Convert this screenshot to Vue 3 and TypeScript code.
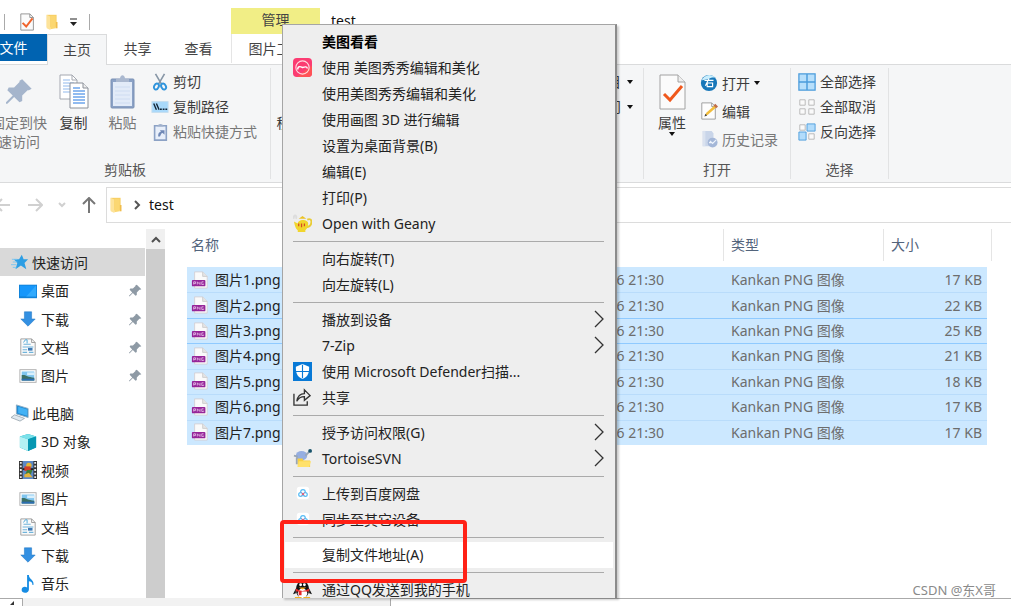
<script setup lang="ts">
interface MenuItem {
  label: string
  icon?: string
  bold?: boolean
  sub?: boolean
  active?: boolean
}
interface NavItem {
  label: string
  icon: string
  root?: boolean
  pinned?: boolean
  selected?: boolean
  gap?: boolean
}
interface Tool {
  label: string
  icon: string
  disabled?: boolean
  drop?: boolean
}

const icons: Record<string, string> = {
  docCheck:
    '<path d="M2 1h10l4 4v14H2z" fill="#fbfbfb" stroke="#8d8d8d"/><path d="M12 1v4h4" fill="none" stroke="#8d8d8d"/><path d="M4 11l4 4 7-9" fill="none" stroke="#f0642c" stroke-width="2.2"/>',
  docCheckBig:
    '<path d="M3 1h18l7 7v27H3z" fill="#fbfbfb" stroke="#a2a2a2"/><path d="M21 1v7h7" fill="#eee" stroke="#a2a2a2"/><path d="M7 20l6 6 12-14" fill="none" stroke="#f0581c" stroke-width="3"/>',
  folder:
    '<path d="M3 2h11v14H3z" fill="#f7ce62"/><path d="M13 10h2v7h-2z" fill="#f0bd4c"/><path d="M3 2l4 2v15l-4-2z" fill="#fde39a"/><path d="M7 3h6v14l-6 1z" fill="#fbd772"/>',
  pin: '<path d="M12 1l7 7-2 1-1 0-4 4 0 4-2 1-4-4-5 5-1 0 0-1 5-5-4-4 1-2 4 0 4-4 0-1z" fill="#a5b5cc"/>',
  pinSmall: '<path d="M12 1l7 7-2 1-1 0-4 4 0 4-2 1-4-4-5 5-1 0 0-1 5-5-4-4 1-2 4 0 4-4 0-1z" fill="#8e9aa5"/>',
  copy:
    '<path d="M1 1h12l5 5v19H1z" fill="#fff" stroke="#a4a8b0"/><path d="M13 1v5h5" fill="none" stroke="#a4a8b0"/><path d="M4 6h7M4 9h11M4 12h11M4 15h11M4 18h11" stroke="#91b9ec"/><path d="M11 9h13l5 5v20H11z" fill="#fff" stroke="#8b9099"/><path d="M24 9v5h5" fill="#eee" stroke="#8b9099"/><path d="M14 14h7M14 17h12M14 20h12M14 23h12M14 26h12M14 29h12" stroke="#6ea5ec" stroke-width="1.4"/>',
  paste:
    '<rect x="2" y="5" width="23" height="29" rx="1" fill="#8ba2c6" stroke="#7b91b5"/><rect x="4" y="8" width="19" height="24" fill="#e2ebf8"/><path d="M6 13h15M6 17h15M6 21h15M6 25h15M6 29h15" stroke="#cedcf1"/><path d="M7 8V5h4c0-5 5-5 5 0h4v3z" fill="#aab8cf"/>',
  cut:
    '<path d="M5 1l7 12M15 1L8 13" stroke="#8796a6" stroke-width="1.8"/><ellipse cx="6" cy="15" rx="2.500" ry="3.500" fill="none" stroke="#3094dc" stroke-width="2.2" transform="rotate(25 6 15)"/><ellipse cx="14" cy="15" rx="2.500" ry="3.500" fill="none" stroke="#3094dc" stroke-width="2.2" transform="rotate(-25 14 15)"/>',
  path:
    '<rect x="1" y="4" width="18" height="12" fill="#a9d9fa" stroke="#c6ddee"/><path d="M3 6l3 7M6 6l3 7" stroke="#123" stroke-width="1.5"/><path d="M10 12.5h2M13 12.5h2M16 12.5h2" stroke="#123" stroke-width="1.4"/>',
  shortcut:
    '<path d="M4 3h13v16H4z" fill="#e8effa" stroke="#8ca2c5" stroke-width="1.8"/><path d="M7 4c0-4 7-4 7 0z" fill="#9fb0cb"/><path d="M8 15c0-4 1-5 3-5L10 8h5v5l-2-2c-2 0-2 2-3 4z" fill="#7089b6"/>',
  open:
    '<circle cx="10" cy="10" r="9" fill="#1877b9"/><path d="M2 7a9 9 0 0 1 15-3c-5-1-7 2-15 3z" fill="#c8eefd"/><path d="M3 14a9 9 0 0 0 14 1 9 9 0 0 1-14-1z" fill="#51cdf2"/><path d="M5 7h10M10 5L6 13M8 10h6v4H8z" fill="none" stroke="#fff" stroke-width="1.3"/>',
  edit:
    '<path d="M2 1h11l4 4v14H2z" fill="#fdfdfd" stroke="#999"/><path d="M13 1v4h4" fill="none" stroke="#999"/><path d="M5 16l2-4 9-8 2 2-9 8z" fill="#f2bd3c"/><path d="M15 4l2-2 3 3-2 2z" fill="#bf6d4a"/><path d="M5 16l1-3 2 2z" fill="#444"/>',
  history:
    '<path d="M3 1h10l2 3v14H3z" fill="#c9d5e9"/><path d="M3 1h3v17H3z" fill="#dae2ef"/><circle cx="14" cy="14" r="5.5" fill="#a4b7d8"/><path d="M11 12l3 3 4-4M10 14h3" fill="none" stroke="#eef4fc" stroke-width="1.3"/>',
  selectAll:
    '<path d="M1 1h18v18H1z" fill="#b7dffb" stroke="#4a9cdc" stroke-width="1.4"/><path d="M10 1v18M1 10h18" stroke="#4a9cdc" stroke-width="1.6"/>',
  selectNone:
    '<path d="M2 2h6v6H2zM12 2h6v6h-6zM2 12h6v6H2zM12 12h6v6h-6z" fill="#fafafa" stroke="#b5b5b5"/>',
  invert:
    '<path d="M2 2h6v6H2zM12 12h6v6h-6z" fill="#fafafa" stroke="#b5b5b5"/><path d="M10 1h9v8h-9zM1 10h8v9H1z" fill="#b2dcfb" stroke="#4a9cdc"/>',
  star:
    '<path d="M12 2l2 5 5 0-4 4 2 7-6-4-6 4 2-7-4-4 6 0z" fill="#2d9ee4"/><path d="M1 7h6M2 10h5M0 13h6M2 16h4" stroke="#75c5f2" stroke-width="1"/>',
  desktop: '<rect x="0" y="3" width="20" height="15" fill="#1182d8"/><path d="M1 4h18v12H1z" fill="#1697fb"/><path d="M19 4v12H8z" fill="#32aafd"/>',
  download: '<path d="M6 2h8v8h4l-8 8-8-8h4z" fill="#3390e2" stroke="#2479c3" stroke-width=".6"/>',
  document:
    '<path d="M2 1h12l4 4v14H2z" fill="#fafafa" stroke="#9b9b9b"/><path d="M14 1v4h4" fill="none" stroke="#999"/><path d="M5 7h8M4 10h12M4 13h5M4 16h5M11 16h5" stroke="#6fb4db" stroke-width="1.2"/><path d="M10 11h5v3h-5z" fill="#3d79b5"/><path d="M5 5l2-3h2v4" fill="none" stroke="#48a7d8"/>',
  picture:
    '<rect x="1" y="3" width="18" height="14" fill="#fff" stroke="#aaa"/><path d="M3 5h14v10H3z" fill="#80c5ef"/><path d="M3 9c4-1 6 2 14 3v3H3z" fill="#3c7065"/><path d="M3 13h14v2H3z" fill="#2d6db3"/><path d="M9 6h8v3H9z" fill="#d8effc"/>',
  pc:
    '<path d="M6 1l13 4v10L6 11z" fill="#218bd4" stroke="#8babc2"/><path d="M8 3l10 3v7L8 10z" fill="#42b2f5"/><path d="M4 12l11 4-5 3-10-4z" fill="#dfe8ef" stroke="#8d9aa5" stroke-width=".8"/>',
  cube:
    '<path d="M10 1l9 3v12l-9 4-9-4V4z" fill="#10a6bf"/><path d="M10 1l9 3-9 3-9-3z" fill="#7ae1ea"/><path d="M1 4l9 3v13l-9-4z" fill="#b4f1f4"/><path d="M10 7l9-3v12l-9 4z" fill="#0697b2"/>',
  video:
    '<rect width="20" height="20" fill="#333"/><path d="M4 0h12v20H4z" fill="#5d88c5"/><path d="M4 8h12v2H4z" fill="#222"/><circle cx="11" cy="5" r="3" fill="#e7b533"/><path d="M6 6h7v5H6z" fill="#cf3d2b"/><path d="M9 10h6l-2 5H7z" fill="#417d39"/><path d="M6 15l5-2 4 5H6z" fill="#e3b33d"/><path d="M2 1v18M18 1v18" stroke="#eee" stroke-width="2" stroke-dasharray="2 2"/>',
  music: '<path d="M9 0h2c0 5 6 5 5 11h-1c0-3-2-4-4-4v9c0 5-9 5-8 0 0-3 4-4 6-2z" fill="#168ce3"/>',
  png:
    '<path d="M4 1h9l5 5v13H4z" fill="#fafafa" stroke="#d4d0d5"/><path d="M13 1v5h5" fill="#e4e4e4" stroke="#ccc"/><rect x="1" y="10" width="15" height="7" rx="1" fill="#962599"/><path d="M3 15v-3h2v2H3M7 15v-3l3 3v-3M14 12h-2v3h2v-1" stroke="#e1b4e2" fill="none"/>',
  meitu:
    '<rect width="20" height="20" rx="4" fill="#fb3c72"/><path d="M4 20h12a4 4 0 0 0 4-4V8z" fill="#ff5256"/><circle cx="10" cy="10" r="7" fill="none" stroke="#ffd8df" stroke-width="1.2"/><path d="M5 12c0-4 3-3 5-2 3-1 5-1 5 1" fill="none" stroke="#fff" stroke-width="1.5"/>',
  geany:
    '<path d="M1 5C0 0 5 1 3 5" fill="none" stroke="#ddd" stroke-width="2"/><path d="M15 6c6-3 6 7-1 8" fill="none" stroke="#e9cc35" stroke-width="2"/><path d="M1 8l4 2c0-5 11-5 11 0 0 4-2 6-3 7v2H5v-2c-2-1-3-4-4-9z" fill="#f1d52d"/><path d="M6 5h8l-4-3z" fill="#ebc326"/><path d="M6 10v3M9 10v4M12 10v3" stroke="#d74b26" stroke-width="1.3"/>',
  defender:
    '<rect width="20" height="20" fill="#0879d6"/><path d="M10 2l7 3c0 7-1 10-7 13-6-3-7-6-7-13z" fill="#fff"/><path d="M10 3v14M3 10h14" stroke="#0879d6" stroke-width="1.2"/>',
  share:
    '<path d="M1 6v12h14v-4" fill="none" stroke="#333" stroke-width="1.4"/><path d="M4 14c1-6 4-8 8-8V2l6 6-6 5V9c-4 0-6 1-8 5z" fill="none" stroke="#333" stroke-width="1.4"/>',
  tortoise:
    '<ellipse cx="9" cy="7" rx="6" ry="5" fill="#95aee1"/><path d="M1 7l4 1M4 9v7M13 7l4-4" fill="none" stroke="#9aa6b5" stroke-width="2"/><circle cx="18" cy="2" r="2" fill="#17536b"/><path d="M5 10h5l1 2h7v7H5z" fill="#f7cf42"/><path d="M6 13h13l-2 6H5z" fill="#ffe16a"/>',
  cloud:
    '<rect x="4" y="3" width="13" height="13" rx="3" fill="#fff"/><circle cx="8" cy="11" r="2" fill="none" stroke="#57bcf5" stroke-width="1.3"/><circle cx="13" cy="11" r="2" fill="none" stroke="#57bcf5" stroke-width="1.3"/><path d="M8 9c0-4 5-4 5 0" fill="none" stroke="#57bcf5" stroke-width="1.3"/><path d="M9 9l3 3M12 9l-3 3" stroke="#ec5b72"/>',
  qq:
    '<ellipse cx="10" cy="10" rx="7" ry="9" fill="#111"/><path d="M3 9l-3 6 3-1M17 9l3 6-3-1" fill="#111"/><ellipse cx="10" cy="14" rx="5" ry="5" fill="#fff"/><circle cx="8" cy="5" r="1.5" fill="#fff"/><circle cx="12" cy="5" r="1.5" fill="#fff"/><path d="M6 8h8l-4 2z" fill="#f6ac19"/><path d="M3 9q7 5 14 0v3H9v4H6v-4H3z" fill="#e82727"/><path d="M2 18h7v2H2zM11 18h7v2h-7z" fill="#f4b322"/>',
}

const smallClipboard: Tool[] = [
  { label: '剪切', icon: 'cut' },
  { label: '复制路径', icon: 'path' },
  { label: '粘贴快捷方式', icon: 'shortcut', disabled: true },
]
const openTools: Tool[] = [
  { label: '打开', icon: 'open', drop: true },
  { label: '编辑', icon: 'edit' },
  { label: '历史记录', icon: 'history', disabled: true },
]
const selectTools: Tool[] = [
  { label: '全部选择', icon: 'selectAll' },
  { label: '全部取消', icon: 'selectNone' },
  { label: '反向选择', icon: 'invert' },
]
const nav: NavItem[] = [
  { label: '快速访问', icon: 'star', root: true, selected: true },
  { label: '桌面', icon: 'desktop', pinned: true },
  { label: '下载', icon: 'download', pinned: true },
  { label: '文档', icon: 'document', pinned: true },
  { label: '图片', icon: 'picture', pinned: true },
  { label: '此电脑', icon: 'pc', root: true, gap: true },
  { label: '3D 对象', icon: 'cube' },
  { label: '视频', icon: 'video' },
  { label: '图片', icon: 'picture' },
  { label: '文档', icon: 'document' },
  { label: '下载', icon: 'download' },
  { label: '音乐', icon: 'music' },
]
const files = [17, 22, 25, 21, 18, 17, 17].map((size, i) => ({
  name: `图片${i + 1}.png`,
  date: '2023/12/16 21:30',
  type: 'Kankan PNG 图像',
  size: `${size} KB`,
  focused: i === 2,
}))
const menu: MenuItem[][] = [
  [
    { label: '美图看看', bold: true },
    { label: '使用 美图秀秀编辑和美化', icon: 'meitu' },
    { label: '使用美图秀秀编辑和美化' },
    { label: '使用画图 3D 进行编辑' },
    { label: '设置为桌面背景(B)' },
    { label: '编辑(E)' },
    { label: '打印(P)' },
    { label: 'Open with Geany', icon: 'geany' },
  ],
  [{ label: '向右旋转(T)' }, { label: '向左旋转(L)' }],
  [
    { label: '播放到设备', sub: true },
    { label: '7-Zip', sub: true },
    { label: '使用 Microsoft Defender扫描...', icon: 'defender' },
    { label: '共享', icon: 'share' },
  ],
  [
    { label: '授予访问权限(G)', sub: true },
    { label: 'TortoiseSVN', icon: 'tortoise', sub: true },
  ],
  [
    { label: '上传到百度网盘', icon: 'cloud' },
    { label: '同步至其它设备', icon: 'cloud' },
  ],
  [{ label: '复制文件地址(A)', active: true }],
  [{ label: '通过QQ发送到我的手机', icon: 'qq' }],
]
</script>

<template>
  <div class="window">
    <header class="titlebar">
      <div class="quick">
        <i class="bar"></i>
        <button aria-label="属性"><svg class="ic18" viewBox="0 0 20 20" v-html="icons.docCheck" /></button>
        <button aria-label="文件夹"><svg class="ic18" viewBox="0 0 20 20" v-html="icons.folder" /></button>
        <button class="custom" aria-label="自定义"><svg width="9" height="8" viewBox="0 0 9 8"><path d="M1 1h7" stroke="#222" /><path d="M1 4h7L4.500 8z" fill="#222" /></svg></button>
        <i class="bar"></i>
      </div>
      <div class="context-title">管理</div>
      <h1>test</h1>
    </header>

    <nav class="tabs">
      <button class="file">文件</button>
      <button class="home">主页</button>
      <button>共享</button>
      <button>查看</button>
      <button class="context">图片工具</button>
    </nav>

    <section class="ribbon">
      <div class="group clipboard">
        <div class="body">
          <button class="big pinbtn off">
            <svg width="27" height="27" viewBox="0 0 20 20" v-html="icons.pin" />
            <span>固定到快<br />速访问</span>
          </button>
          <button class="big"><svg width="30" height="35" viewBox="0 0 30 35" v-html="icons.copy" /><span>复制</span></button>
          <button class="big off"><svg width="27" height="35" viewBox="0 0 27 35" v-html="icons.paste" /><span>粘贴</span></button>
          <div class="stack">
            <button v-for="t in smallClipboard" :key="t.label" :class="{ off: t.disabled }">
              <svg class="ic18" viewBox="0 0 20 20" v-html="icons[t.icon]" />{{ t.label }}
            </button>
          </div>
        </div>
        <div class="caption">剪贴板</div>
      </div>
      <div class="group organize">
        <div class="body">
          <button class="big"><svg width="27" height="35" viewBox="0 0 20 20" v-html="icons.folder" /><span>移动到</span></button>
          <div class="stack">
            <button>新建项目<i class="caret"></i></button>
            <button>轻松访问<i class="caret"></i></button>
          </div>
        </div>
      </div>
      <div class="group opening">
        <div class="body">
          <button class="big props">
            <svg width="30" height="36" viewBox="0 0 30 36" v-html="icons.docCheckBig" />
            <span>属性</span><i class="caret"></i>
          </button>
          <div class="stack roomy">
            <button v-for="t in openTools" :key="t.label" :class="{ off: t.disabled }">
              <svg class="ic18" viewBox="0 0 20 20" v-html="icons[t.icon]" />{{ t.label }}<i v-if="t.drop" class="caret"></i>
            </button>
          </div>
        </div>
        <div class="caption">打开</div>
      </div>
      <div class="group selecting">
        <div class="body">
          <div class="stack">
            <button v-for="t in selectTools" :key="t.label">
              <svg class="ic18" viewBox="0 0 20 20" v-html="icons[t.icon]" />{{ t.label }}
            </button>
          </div>
        </div>
        <div class="caption">选择</div>
      </div>
    </section>

    <div class="address">
      <div class="arrows">
        <button aria-label="后退"><svg width="16" height="16" viewBox="0 0 16 16"><path d="M15 8H1M7 2L1 8l6 6" /></svg></button>
        <button aria-label="前进"><svg width="16" height="16" viewBox="0 0 16 16"><path d="M1 8h14M9 2l6 6-6 6" /></svg></button>
        <button aria-label="最近"><svg width="8" height="16" viewBox="0 0 8 16"><path d="M1 6l3 3 3-3" /></svg></button>
        <button class="up" aria-label="向上"><svg width="14" height="16" viewBox="0 0 14 16"><path d="M7 16V1M1 7l6-6 6 6" /></svg></button>
      </div>
      <div class="crumbs">
        <svg class="ic18" viewBox="0 0 20 20" v-html="icons.folder" />
        <svg width="7" height="10" viewBox="0 0 7 10"><path d="M1 1l4 4-4 4" fill="none" stroke="#555" stroke-width="2" /></svg>
        <a href="#">test</a>
      </div>
    </div>

    <main>
      <aside>
        <a v-for="(n, i) in nav" :key="i" href="#" :class="{ root: n.root, selected: n.selected, gap: n.gap }">
          <svg class="ic18" viewBox="0 0 20 20" v-html="icons[n.icon]" />
          <span>{{ n.label }}</span>
          <svg v-if="n.pinned" class="pinned" viewBox="0 0 20 20" v-html="icons.pinSmall" />
        </a>
      </aside>
      <div class="scroll">
        <button aria-label="向上滚动"><svg width="10" height="7" viewBox="0 0 10 7"><path d="M1 6l4-4 4 4" fill="none" stroke="#505050" stroke-width="2" /></svg></button>
      </div>
      <div class="files">
        <table>
          <colgroup><col /><col class="c-date" /><col class="c-type" /><col class="c-size" /><col class="c-end" /></colgroup>
          <thead>
            <tr>
              <th><div class="first">名称</div></th>
              <th><div></div></th>
              <th><div>类型</div></th>
              <th colspan="2"><div class="last">大小</div></th>
            </tr>
          </thead>
          <tbody>
            <tr v-for="f in files" :key="f.name" :class="{ focused: f.focused }">
              <td><div class="name"><svg class="ic18" viewBox="0 0 20 20" v-html="icons.png" />{{ f.name }}</div></td>
              <td class="date">{{ f.date }}</td>
              <td class="type">{{ f.type }}</td>
              <td class="size">{{ f.size }}</td>
              <td class="end"></td>
            </tr>
          </tbody>
        </table>
      </div>
    </main>

    <div class="menu" role="menu">
      <div v-for="(g, gi) in menu" :key="gi" class="section">
        <button v-for="m in g" :key="m.label" role="menuitem" :class="{ bold: m.bold, active: m.active }">
          <span class="slot"><svg v-if="m.icon" width="19" height="19" viewBox="0 0 20 20" v-html="icons[m.icon]" /></span>
          <span>{{ m.label }}</span>
          <svg v-if="m.sub" class="more" width="10" height="18" viewBox="0 0 10 18"><path d="M1 1l8 8-8 8" fill="none" stroke="#333" stroke-width="1.3" /></svg>
        </button>
      </div>
    </div>
    <div class="marker"></div>
    <div class="watermark">CSDN @东X哥</div>

    <footer>
      <i class="corner"><svg width="14" height="6" viewBox="0 0 14 6"><path d="M14 2v4h-4z" fill="#333" /></svg></i>
      <i class="panel"></i>
    </footer>
  </div>
</template>

<style>
html,
body {
  margin: 0;
  overflow: hidden;
}
</style>

<style scoped>
.window {
  position: relative;
  display: flex;
  flex-direction: column;
  height: 100vh;
  overflow: hidden;
  background: #fff;
  color: #222;
  font: 14px/19px 'Noto Sans', 'Noto Sans CJK SC', sans-serif;
}
button {
  padding: 0;
  border: 0;
  background: none;
  color: inherit;
  font: inherit;
  white-space: nowrap;
}
a {
  color: inherit;
  text-decoration: none;
}
svg {
  display: block;
  flex: none;
}
.ic18 {
  width: 18px;
  height: 18px;
}
.caret {
  width: 0;
  height: 0;
  border: 3px solid transparent;
  border-top: 4px solid #111;
  border-bottom: 0;
}

.titlebar {
  display: flex;
  height: 34px;
  flex: none;
}
.quick {
  display: flex;
  align-items: center;
  gap: 7px;
  width: 231px;
  padding: 10px 0 0 4px;
  box-sizing: border-box;
}
.quick .bar {
  width: 1px;
  height: 16px;
  background: #aaa;
}
.quick .bar:first-child {
  margin-right: 7px;
}
.custom {
  margin-right: 4px;
}
.context-title {
  width: 89px;
  margin-top: 8px;
  background: #f1ee86;
  line-height: 24px;
  text-align: center;
  color: #444;
}
h1 {
  margin: 11px 0 0 11px;
  font: inherit;
  color: #111;
}

.tabs {
  display: flex;
  flex: none;
  height: 30px;
  border-bottom: 1px solid #dadbdc;
  margin-left: -20px;
}
.tabs button {
  width: 61px;
  height: 29px;
  color: #444;
}
.tabs .file {
  width: 67px;
  height: 27px;
  background: #0063b1;
  color: #fff;
}
.tabs .home {
  width: 60px;
  height: 31px;
  padding-bottom: 2px;
  border: 1px solid #dadbdc;
  border-bottom: 0;
  background: #f5f6f7;
}
.tabs .context {
  width: 90px;
  margin-left: 2px;
  border-left: 1px solid #e5e5e5;
}

.ribbon {
  display: flex;
  flex: none;
  height: 117px;
  background: #f5f6f7;
  border-bottom: 1px solid #dadbdc;
  color: #3c3c3c;
}
.group {
  display: flex;
  flex-direction: column;
  justify-content: space-between;
  box-sizing: border-box;
  margin: 3px 0;
  border-right: 1px solid #e2e3e4;
}
.body {
  display: flex;
}
.caption {
  text-align: center;
  line-height: 18px;
  color: #555;
}
.clipboard {
  width: 291px;
  margin-left: -20px;
}
.organize {
  width: 373px;
}
.organize .body {
  justify-content: space-between;
  padding: 0 10px 0 2px;
}
.opening {
  width: 147px;
}
.selecting {
  width: 98px;
}
.big {
  display: flex;
  flex-direction: column;
  align-items: center;
  width: 49px;
  padding-top: 6px;
}
.big span {
  margin-top: 4px;
}
.pinbtn {
  width: 68px;
  margin-left: 5px;
  margin-right: -4px;
}
.pinbtn svg {
  margin: 4px 0;
}
.props {
  width: 56px;
}
.props span {
  margin-top: 3px;
}
.stack {
  display: flex;
  flex-direction: column;
  padding: 1px 0 0 7px;
}
.stack button {
  display: flex;
  align-items: center;
  gap: 4px;
  height: 25px;
}
.clipboard .stack {
  padding-left: 4px;
}
.stack.roomy {
  padding-left: 0;
}
.stack.roomy button {
  height: 28px;
}
.organize .stack button {
  gap: 6px;
}
.off {
  color: #777;
}

.address {
  display: flex;
  flex: none;
  height: 36px;
  padding-top: 4px;
}
.arrows {
  display: flex;
  align-items: center;
  justify-content: space-between;
  width: 101px;
  margin-left: -5px;
}
.arrows path {
  fill: none;
  stroke: #d0d0d0;
  stroke-width: 2;
}
.arrows .up path {
  stroke: #777;
}
.crumbs {
  display: flex;
  flex: 1;
  align-items: center;
  gap: 8px;
  margin-left: 10px;
  padding: 0 0 1px 1px;
  border: 1px solid #dcdcdc;
  border-right: 0;
  color: #111;
}

main {
  display: flex;
  flex: 1;
  min-height: 0;
  padding-top: 6px;
}
aside {
  display: flex;
  flex-direction: column;
  width: 145px;
  padding-top: 19px;
  box-sizing: border-box;
}
aside a {
  display: flex;
  flex: 1;
  align-items: center;
  gap: 4px;
  padding: 0 3px 0 19px;
}
aside .root {
  padding-left: 11px;
  gap: 3px;
}
aside .selected {
  background: #d9d9d9;
}
aside .gap {
  margin-top: 9px;
}
.pinned {
  width: 13px;
  height: 13px;
  margin-left: auto;
}
.scroll {
  width: 19px;
  margin-left: 1px;
  background: #cdcdcd;
}
.scroll button {
  display: flex;
  align-items: center;
  justify-content: center;
  width: 100%;
  height: 20px;
  background: #f0f0f0;
}
.files {
  flex: 1;
  padding: 0 19px 0 22px;
}
table {
  width: 100%;
  height: 216px;
  table-layout: fixed;
  border-collapse: separate;
  border-spacing: 0;
}
.c-date {
  width: 200px;
}
.c-type {
  width: 160px;
}
.c-size {
  width: 103px;
}
.c-end {
  width: 5px;
}
th,
td {
  padding: 0;
  text-align: left;
  font-weight: normal;
}
th {
  height: 38px;
  vertical-align: top;
  color: #53647c;
}
th div {
  height: 32px;
  padding-left: 7px;
  border-right: 1px solid #e5e5e5;
  line-height: 32px;
}
th .first {
  padding-left: 4px;
}
td {
  height: 24px;
  padding-bottom: 1px;
  border-top: 1px solid #b9dcfb;
  background: #cce8ff;
  color: #6d6d6d;
  box-sizing: border-box;
}
tr:first-child td {
  border-top-color: #cce8ff;
}
.focused td,
.focused + tr td {
  border-top-color: #8fcaff;
}
td.end {
  border: 0;
  background: none;
}
.name {
  display: flex;
  align-items: center;
  gap: 6px;
  padding-left: 4px;
  color: #222;
}
.date {
  padding-right: 60px;
  text-align: right;
}
.type {
  padding-left: 7px;
}
.size {
  padding-right: 5px;
  text-align: right;
}

.menu {
  position: absolute;
  top: 24px;
  bottom: 8px;
  left: 282px;
  width: 335px;
  padding: 4px 2px 0;
  box-sizing: border-box;
  border: 1px solid #a5a5a5;
  border-right: 2px solid #8b8b8b;
  border-bottom: 0;
  background: #eee;
  box-shadow: 2px 2px 2px #0003;
  overflow: hidden;
}
.section + .section {
  padding-top: 9px;
  background: linear-gradient(#aaa, #aaa) 8px 4px / calc(100% - 17px) 1px no-repeat;
}
.menu button {
  display: flex;
  align-items: center;
  width: 100%;
  height: 26px;
  padding: 0 9px 2px 8px;
  text-align: left;
}
.slot {
  width: 29px;
}
.more {
  margin-left: auto;
}
.bold {
  font-weight: 700;
  color: #000;
}
.menu .active {
  background: #fff;
}
.marker {
  position: absolute;
  top: 520px;
  left: 280px;
  width: 187px;
  height: 63px;
  box-sizing: border-box;
  border: 4px solid #ff2116;
  border-radius: 4px;
}
.watermark {
  position: absolute;
  right: 15px;
  bottom: 6px;
  font-size: 13px;
  color: #8a8a8a;
}
footer {
  display: flex;
  flex: none;
  justify-content: space-between;
  height: 8px;
  background: #f2f2f2;
}
.corner {
  width: 22px;
  border-top: 1px solid #aaa;
  border-right: 1px solid #aaa;
  background: #fff;
}
.panel {
  width: calc(100% - 390px);
  border-top: 1px solid #aaa;
  border-left: 1px solid #aaa;
  box-sizing: border-box;
  background: #fff;
}
</style>
